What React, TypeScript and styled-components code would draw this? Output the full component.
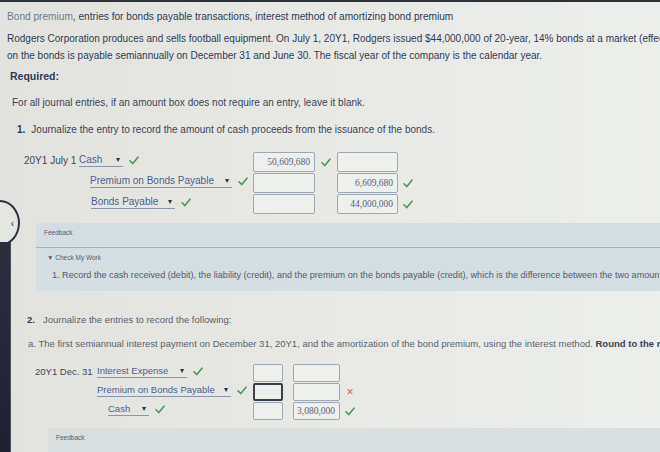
import React from 'react';
import styled, { createGlobalStyle } from 'styled-components';

const GlobalStyle = createGlobalStyle`
  html, body {
    margin: 0;
    padding: 0;
    overflow: hidden;
  }
  body {
    font-family: 'Liberation Sans', Arial, sans-serif;
    background: #e5e6e1;
  }
`;

type Line = {
  account: string;
  indent: number;
  selectWidth: number;
  debit?: string;
  credit?: string;
  debitMark?: 'ok' | 'bad';
  creditMark?: 'ok' | 'bad';
  focused?: boolean;
};

const entry1: Line[] = [
  { account: 'Cash', indent: 0, selectWidth: 44, debit: '50,609,680', debitMark: 'ok' },
  { account: 'Premium on Bonds Payable', indent: 11, selectWidth: 142, credit: '6,609,680', creditMark: 'ok' },
  { account: 'Bonds Payable', indent: 12, selectWidth: 84, credit: '44,000,000', creditMark: 'ok' },
];

const entry2: Line[] = [
  { account: 'Interest Expense', indent: 0, selectWidth: 90 },
  { account: 'Premium on Bonds Payable', indent: 0, selectWidth: 134, focused: true, creditMark: 'bad' },
  { account: 'Cash', indent: 11, selectWidth: 41, credit: '3,080,000', creditMark: 'ok' },
];

const Check = () => (
  <CheckIcon viewBox="0 0 10 9">
    <polyline points="1,4.8 3.8,7.6 9,1.2" fill="none" stroke="#4c9a58" strokeWidth="1.6" strokeLinecap="round" />
  </CheckIcon>
);

const Mark = ({ kind }: { kind?: 'ok' | 'bad' }) => {
  if (!kind) return <span />;
  if (kind === 'bad') return <Cross>×</Cross>;
  return <Check />;
};

type JournalProps = {
  date: string;
  lines: Line[];
  dateW: number;
  acctW: number;
  debitW: number;
  gapW: number;
  creditW: number;
  rowH: number;
  left: number;
  top: number;
  size: number;
};

const Journal: React.FC<JournalProps> = ({ date, lines, dateW, acctW, debitW, gapW, creditW, rowH, left, top, size }) => (
  <JournalTable $left={left} $top={top}>
    {lines.map((l, i) => (
      <JournalRow key={i} $cols={`${dateW}px ${acctW}px ${debitW}px ${gapW}px ${creditW}px 20px`} $h={rowH} $size={size}>
        <DateCell>{i === 0 ? date : ''}</DateCell>
        <AccountCell $indent={l.indent}>
          <Select $w={l.selectWidth}>
            <span>{l.account}</span>
            <Caret>▾</Caret>
          </Select>
          <Check />
        </AccountCell>
        <AmountBox $focused={l.focused}>{l.debit}</AmountBox>
        <MarkCell>{l.debitMark && <Mark kind={l.debitMark} />}</MarkCell>
        <AmountBox>{l.credit}</AmountBox>
        <MarkCell>{l.creditMark && <Mark kind={l.creditMark} />}</MarkCell>
      </JournalRow>
    ))}
  </JournalTable>
);

const App: React.FC = () => {
  return (
    <Page>
      <GlobalStyle />
      <Title>
        <TitleLink>Bond premium</TitleLink>, entries for bonds payable transactions, interest method of amortizing bond premium
      </Title>
      <Intro>
        Rodgers Corporation produces and sells football equipment. On July 1, 20Y1, Rodgers issued $44,000,000 of 20-year, 14% bonds at a market (effective) interest rate of 11%,
        <br />
        on the bonds is payable semiannually on December 31 and June 30. The fiscal year of the company is the calendar year.
      </Intro>
      <Required>Required:</Required>
      <Note>For all journal entries, if an amount box does not require an entry, leave it blank.</Note>
      <Step $left={10} $top={13}>
        <b>1.</b>
        <span>Journalize the entry to record the amount of cash proceeds from the issuance of the bonds.</span>
      </Step>
      <Journal date="20Y1 July 1" lines={entry1} dateW={55} acctW={174} debitW={62} gapW={22} creditW={61} rowH={20} left={17} top={15} size={10} />
      <Feedback>
        <FeedbackHead>Feedback</FeedbackHead>
        <FeedbackBody>
          <Toggle>▼ Check My Work</Toggle>
          <Hint>
            1. Record the cash received (debit), the liability (credit), and the premium on the bonds payable (credit), which is the difference between the two amounts.
          </Hint>
        </FeedbackBody>
      </Feedback>
      <Step $left={20} $top={22} $muted>
        <b>2.</b>
        <span>Journalize the entries to record the following:</span>
      </Step>
      <SubStep>
        a. The first semiannual interest payment on December 31, 20Y1, and the amortization of the bond premium, using the interest method. <b>Round to the nearest dollar.</b>
      </SubStep>
      <Journal date="20Y1 Dec. 31" lines={entry2} dateW={62} acctW={156} debitW={30} gapW={10} creditW={47} rowH={18} left={28} top={13} size={9.5} />
      <FeedbackTail>
        <FeedbackHead>Feedback</FeedbackHead>
      </FeedbackTail>
      <SideTab>‹</SideTab>
      <Bezel />
    </Page>
  );
};

const Page = styled.div`
  position: relative;
  width: 660px;
  height: 452px;
  overflow: hidden;
  box-sizing: border-box;
  border-top: 2px solid #2c313a;
  padding-left: 7px;
  color: #2f3a55;
  background: linear-gradient(90deg, #e2e3de 0%, #e8e9e5 50%, #eceeec 100%);
`;

const Title = styled.div`
  padding-top: 8px;
  font-size: 10.15px;
  line-height: 14px;
  white-space: nowrap;
`;

const TitleLink = styled.span`
  color: #6f7c8f;
`;

const Intro = styled.div`
  margin-top: 6px;
  font-size: 10px;
  line-height: 17px;
  white-space: nowrap;
`;

const Required = styled.div`
  margin-top: 5px;
  padding-left: 3px;
  font-size: 10.5px;
  font-weight: bold;
  line-height: 14px;
`;

const Note = styled.div`
  margin-top: 13px;
  padding-left: 5px;
  font-size: 10px;
  line-height: 14px;
  color: #3a4458;
`;

const Step = styled.div<{ $left: number; $top: number; $muted?: boolean }>`
  display: flex;
  gap: ${p => (p.$muted ? 8 : 6)}px;
  margin-top: ${p => p.$top}px;
  padding-left: ${p => p.$left}px;
  font-size: ${p => (p.$muted ? 9.5 : 10)}px;
  line-height: 14px;
  white-space: nowrap;
  color: ${p => (p.$muted ? '#5a616c' : '#3a4458')};
  b {
    color: #2f3a55;
  }
`;

const SubStep = styled.div`
  margin-top: 10px;
  padding-left: 21px;
  font-size: 9.5px;
  line-height: 14px;
  white-space: nowrap;
  color: #5c636e;
  b {
    color: #3a4252;
  }
`;

const JournalTable = styled.div<{ $left: number; $top: number }>`
  margin-top: ${p => p.$top}px;
  padding-left: ${p => p.$left}px;
  display: flex;
  flex-direction: column;
  gap: 1px;
`;

const JournalRow = styled.div<{ $cols: string; $h: number; $size: number }>`
  display: grid;
  grid-template-columns: ${p => p.$cols};
  height: ${p => p.$h}px;
  align-items: center;
  font-size: ${p => p.$size}px;
`;

const DateCell = styled.div`
  color: #3f475a;
  white-space: nowrap;
  margin-top: -4px;
`;

const AccountCell = styled.div<{ $indent: number }>`
  display: flex;
  align-items: center;
  gap: 6px;
  padding-left: ${p => p.$indent}px;
  margin-top: -4px;
`;

const Select = styled.span<{ $w: number }>`
  display: inline-flex;
  justify-content: space-between;
  align-items: center;
  width: ${p => p.$w}px;
  box-sizing: border-box;
  padding-right: 3px;
  border-bottom: 1px solid #8c97ad;
  color: #4d5f8c;
  white-space: nowrap;
  line-height: 12px;
`;

const Caret = styled.span`
  font-size: 8px;
  color: #2e3444;
`;

const CheckIcon = styled.svg`
  width: 10px;
  height: 9px;
  flex: none;
`;

const Cross = styled.span`
  color: #d4566a;
  font-size: 12px;
  line-height: 10px;
`;

const MarkCell = styled.div`
  display: flex;
  justify-content: center;
`;

const AmountBox = styled.div<{ $focused?: boolean }>`
  height: 100%;
  box-sizing: border-box;
  border: ${p => (p.$focused ? '2px solid #3a3f4c' : '1px solid #9ea8b3')};
  border-radius: 2px;
  background: #eef0ee;
  display: flex;
  align-items: center;
  justify-content: flex-end;
  padding-right: 4px;
  font-family: 'Liberation Serif', 'Times New Roman', serif;
  font-size: 9.5px;
  color: #5a6276;
`;

const Feedback = styled.div`
  margin-top: 9px;
  margin-left: 29px;
  width: 640px;
  height: 68px;
  background: #d4dde2;
  color: #4a5262;
`;

const FeedbackHead = styled.div`
  height: 24px;
  padding-left: 8px;
  font-size: 6.5px;
  line-height: 20px;
  border-bottom: 1px solid #a7b1ba;
  color: #555c69;
`;

const FeedbackBody = styled.div`
  padding: 4px 0 0 11px;
`;

const Toggle = styled.div`
  font-size: 6.5px;
  line-height: 12px;
  color: #555c69;
`;

const Hint = styled.div`
  margin-top: 5px;
  padding-left: 5px;
  font-size: 9.1px;
  line-height: 12px;
  white-space: nowrap;
  color: #535b6b;
`;

const FeedbackTail = styled.div`
  margin-top: 8px;
  margin-left: 41px;
  height: 40px;
  background: #d9dedf;
`;

const SideTab = styled.div`
  position: absolute;
  left: -20px;
  top: 198px;
  width: 32px;
  height: 42px;
  border: 2px solid #2d3140;
  border-radius: 50%;
  background: #e4e6e2;
  display: flex;
  align-items: center;
  justify-content: flex-end;
  padding-right: 4px;
  font-size: 10px;
  color: #2d3140;
`;

const Bezel = styled.div`
  position: absolute;
  left: 0;
  top: 240px;
  bottom: 0;
  width: 10px;
  background: linear-gradient(180deg, #2a2e3c 0%, #25293a 40%, #1d2130 100%);
  border-right: 1px solid #4a4f60;
`;

export default App;
